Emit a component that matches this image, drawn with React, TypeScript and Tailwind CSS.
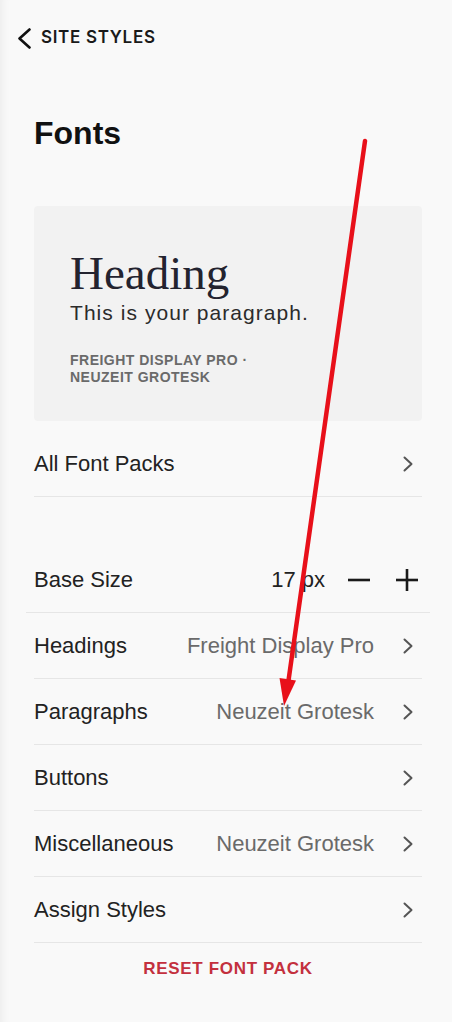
import React from 'react';

interface RowProps {
  label: string;
  value?: string;
}

const ChevronRight: React.FC = () => (
  <svg width="12" height="16" viewBox="0 0 12 16" fill="none" className="shrink-0">
    <polyline
      points="2.5,1.5 9.5,8 2.5,14.5"
      stroke="#555555"
      strokeWidth={2}
      strokeLinecap="round"
      strokeLinejoin="round"
    />
  </svg>
);

const Row: React.FC<RowProps> = ({ label, value }) => (
  <div className="flex h-[66px] items-center border-b border-[#e6e6e6] pr-[8px]">
    <span className="flex-1 text-[#222222]">{label}</span>
    {value && <span className="mr-[28px] text-[#6a6a6a]">{value}</span>}
    <ChevronRight />
  </div>
);

const App: React.FC = () => {
  const rows: RowProps[] = [
    { label: 'Headings', value: 'Freight Display Pro' },
    { label: 'Paragraphs', value: 'Neuzeit Grotesk' },
    { label: 'Buttons' },
    { label: 'Miscellaneous', value: 'Neuzeit Grotesk' },
    { label: 'Assign Styles' },
  ];

  return (
    <div
      className="relative min-h-[1022px] w-full overflow-hidden bg-[#f9f9f9] shadow-[inset_10px_0_10px_-8px_rgba(0,0,0,0.06)]"
      style={{ fontFamily: '"Liberation Sans", Arial, sans-serif' }}
    >
      {/* Header */}
      <div className="flex h-[40px] items-center pl-[17px] mt-[18px]">
        <svg width="15" height="21" viewBox="0 0 15 21" fill="none">
          <polyline
            points="12.5,1.5 2.5,10.5 12.5,19.5"
            stroke="#111111"
            strokeWidth={2.6}
            strokeLinecap="round"
            strokeLinejoin="round"
          />
        </svg>
        <span
          className="ml-[9px] text-[17px] font-semibold tracking-[0.04em] text-[#1a1a1a]"
          style={{ fontFamily: 'Inter, "Liberation Sans", sans-serif' }}
        >
          SITE STYLES
        </span>
      </div>

      <div className="pl-[34px] pr-[30px] text-[22px]">
        <h1 className="mt-[55px] text-[32px] leading-[40px] font-bold text-[#111111]">Fonts</h1>

        {/* Preview card */}
        <div className="mt-[53px] rounded-[4px] bg-[#f2f2f2] pt-[43px] pb-[35px] pl-[36px] pr-[20px]">
          <div
            className="text-[47px] leading-[48px] text-[#23232f]"
            style={{ fontFamily: '"Liberation Serif", "Times New Roman", serif' }}
          >
            Heading
          </div>
          <div className="mt-[2px] text-[21px] leading-[28px] tracking-[0.05em] text-[#2b2b2b]">
            This is your paragraph.
          </div>
          <div className="mt-[25px] text-[14px] leading-[17px] font-bold tracking-[0.035em] text-[#6a6a6a]">
            FREIGHT DISPLAY PRO ·
            <br />
            NEUZEIT GROTESK
          </div>
        </div>

        <div className="mt-[10px]">
          <Row label="All Font Packs" />
        </div>

        {/* Base size */}
        <div className="-mx-2 mt-[50px] flex h-[66px] items-center border-b border-[#e6e6e6] px-2">
          <span className="flex-1 text-[#222222]">Base Size</span>
          <span className="text-[#222222]">17 px</span>
          <svg width="22" height="22" viewBox="0 0 22 22" className="ml-[23px]">
            <line x1="0" y1="11" x2="22" y2="11" stroke="#1a1a1a" strokeWidth={2.6} />
          </svg>
          <svg width="22" height="22" viewBox="0 0 22 22" className="ml-[26px] mr-[4px]">
            <line x1="0" y1="11" x2="22" y2="11" stroke="#1a1a1a" strokeWidth={2.6} />
            <line x1="11" y1="0" x2="11" y2="22" stroke="#1a1a1a" strokeWidth={2.6} />
          </svg>
        </div>

        {rows.map((r) => (
          <Row key={r.label} label={r.label} value={r.value} />
        ))}

        <div className="flex h-[51px] items-center justify-center">
          <button className="text-[17px] font-semibold tracking-[0.04em] text-[#c3303e]">
            RESET FONT PACK
          </button>
        </div>
      </div>

      {/* Red annotation arrow */}
      <svg
        className="pointer-events-none absolute left-0 top-0"
        width="452"
        height="1022"
        viewBox="0 0 452 1022"
      >
        <line x1="365" y1="141" x2="288" y2="684" stroke="#e8101a" strokeWidth={4.5} strokeLinecap="round" />
        <polygon points="284,706 279.5,678 296,680.5" fill="#e8101a" />
      </svg>
    </div>
  );
};

export default App;
